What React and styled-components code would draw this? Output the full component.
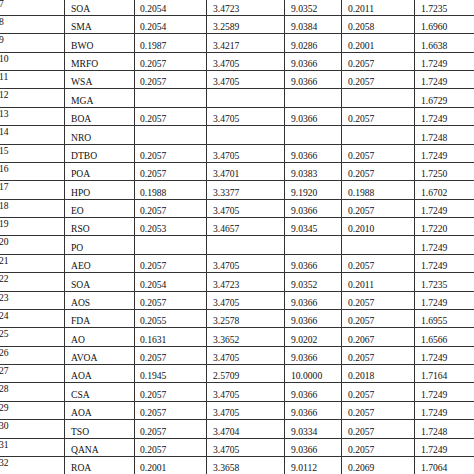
import React from 'react';
import styled, { createGlobalStyle } from 'styled-components';

const GlobalStyle = createGlobalStyle`
  html, body {
    margin: 0;
    padding: 0;
    background: #fff;
    overflow: hidden;
  }
`;

const rows = [
  [7, 'SOA', '0.2054', '3.4723', '9.0352', '0.2011', '1.7235'],
  [8, 'SMA', '0.2054', '3.2589', '9.0384', '0.2058', '1.6960'],
  [9, 'BWO', '0.1987', '3.4217', '9.0286', '0.2001', '1.6638'],
  [10, 'MRFO', '0.2057', '3.4705', '9.0366', '0.2057', '1.7249'],
  [11, 'WSA', '0.2057', '3.4705', '9.0366', '0.2057', '1.7249'],
  [12, 'MGA', '', '', '', '', '1.6729'],
  [13, 'BOA', '0.2057', '3.4705', '9.0366', '0.2057', '1.7249'],
  [14, 'NRO', '', '', '', '', '1.7248'],
  [15, 'DTBO', '0.2057', '3.4705', '9.0366', '0.2057', '1.7249'],
  [16, 'POA', '0.2057', '3.4701', '9.0383', '0.2057', '1.7250'],
  [17, 'HPO', '0.1988', '3.3377', '9.1920', '0.1988', '1.6702'],
  [18, 'EO', '0.2057', '3.4705', '9.0366', '0.2057', '1.7249'],
  [19, 'RSO', '0.2053', '3.4657', '9.0345', '0.2010', '1.7220'],
  [20, 'PO', '', '', '', '', '1.7249'],
  [21, 'AEO', '0.2057', '3.4705', '9.0366', '0.2057', '1.7249'],
  [22, 'SOA', '0.2054', '3.4723', '9.0352', '0.2011', '1.7235'],
  [23, 'AOS', '0.2057', '3.4705', '9.0366', '0.2057', '1.7249'],
  [24, 'FDA', '0.2055', '3.2578', '9.0366', '0.2057', '1.6955'],
  [25, 'AO', '0.1631', '3.3652', '9.0202', '0.2067', '1.6566'],
  [26, 'AVOA', '0.2057', '3.4705', '9.0366', '0.2057', '1.7249'],
  [27, 'AOA', '0.1945', '2.5709', '10.0000', '0.2018', '1.7164'],
  [28, 'CSA', '0.2057', '3.4705', '9.0366', '0.2057', '1.7249'],
  [29, 'AOA', '0.2057', '3.4705', '9.0366', '0.2057', '1.7249'],
  [30, 'TSO', '0.2057', '3.4704', '9.0334', '0.2057', '1.7248'],
  [31, 'QANA', '0.2057', '3.4705', '9.0366', '0.2057', '1.7249'],
  [32, 'ROA', '0.2001', '3.3658', '9.0112', '0.2069', '1.7064'],
];

const Table = styled.div`
  margin-top: -2.4px;
  width: 474px;
  font-family: "Liberation Serif", "Times New Roman", serif;
  font-size: 9.6px;
  line-height: 10px;
  color: #111;
`;

const Row = styled.div`
  display: grid;
  grid-template-columns: 64px 70px 72px 78px 57px 73px 1fr;
  height: 18.375px;
  box-sizing: border-box;
  border-bottom: 1.2px solid #333;
`;

const IndexCell = styled.div`
  padding: 1px 0 0 0;
  text-indent: -1px;
  align-self: start;
`;

const Cell = styled.div`
  display: flex;
  align-items: flex-end;
  padding: 0 0 1px ${(p) => p.$pad}px;
  border-left: 1.2px solid #333;
  white-space: nowrap;
`;

const pads = [6, 5, 6, 6, 6, 6];

export default function App() {
  return (
    <>
      <GlobalStyle />
      <Table>
        {rows.map(([n, ...cells]) => (
          <Row key={n}>
            <IndexCell>{n}</IndexCell>
            {cells.map((c, i) => (
              <Cell key={i} $pad={pads[i]}>{c}</Cell>
            ))}
          </Row>
        ))}
      </Table>
    </>
  );
}
